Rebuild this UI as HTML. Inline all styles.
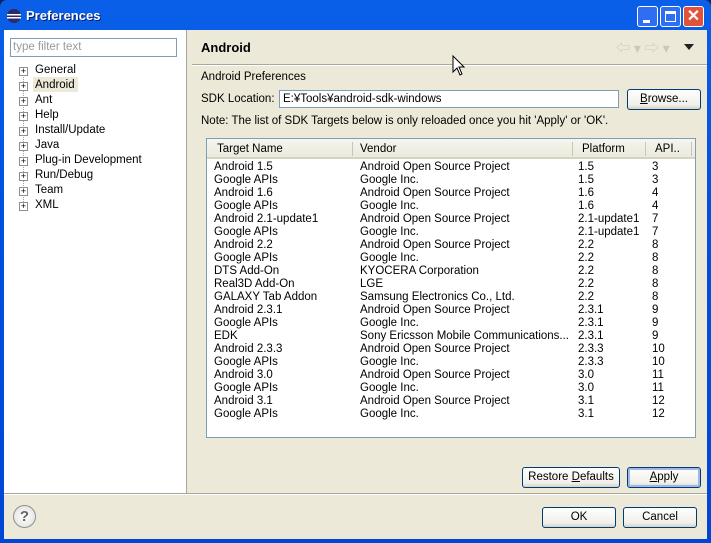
<!DOCTYPE html><html><head><meta charset="utf-8"><style>
*{margin:0;padding:0;box-sizing:border-box}
body{width:711px;height:543px;background:#0a246a;font-family:"Liberation Sans","Noto Sans CJK JP",sans-serif;font-size:11.5px;color:#000;position:relative;overflow:hidden}
.a{position:absolute;white-space:nowrap}
#win{position:absolute;left:0;top:0;width:711px;height:543px;background:linear-gradient(#0a5fe8,#0050e0 40%,#0046d5);border-radius:7px 7px 0 0}
#title{left:26px;top:8px;color:#fff;font-weight:bold;font-size:13px;text-shadow:1px 1px #0a1e6a}
#client{position:absolute;left:4px;top:30px;width:703px;height:509px;background:#ece9d8}
#left{position:absolute;left:4px;top:30px;width:183px;height:463px;background:#fff;border-right:1px solid #aca899}
.btn{position:absolute;border:1px solid #003c74;border-radius:3px;background:linear-gradient(#fff,#f0efe9 80%,#d6d0c5);text-align:center;line-height:19px;font-size:11.5px}
.tb{position:absolute;width:9px;height:9px;border:1px solid #8e8f8f;background:#fff;font-size:9px;line-height:7px;text-align:center;color:#000}
td{height:13px;line-height:13px;padding:0;white-space:nowrap}
</style></head><body>
<div id="win"></div>
<svg class="a" style="left:6px;top:8px" width="16" height="16"><circle cx="8" cy="8" r="7" fill="#2c2a6a"/><rect x="1" y="6" width="14" height="1.5" fill="#fff"/><rect x="1" y="9" width="14" height="1.5" fill="#fff"/></svg>
<div class="a" id="title">Preferences</div>
<div class="a" style="left:637px;top:6px;width:21px;height:21px;border:1px solid #fff;border-radius:3px;background:#2f6df2"><div style="position:absolute;left:5px;top:13px;width:7px;height:3px;background:#fff"></div></div>
<div class="a" style="left:660px;top:6px;width:21px;height:21px;border:1px solid #fff;border-radius:3px;background:#2f6df2"><div style="position:absolute;left:4px;top:4px;width:11px;height:11px;border:1px solid #fff;border-top-width:3px"></div></div>
<div class="a" style="left:683px;top:6px;width:21px;height:21px;border:1px solid #fff;border-radius:3px;background:#e0533a;color:#fff;font-weight:bold;font-size:16px;text-align:center;line-height:19px">✕</div>
<div id="client"></div>
<div id="left"></div>
<div class="a" style="left:10px;top:38px;width:167px;height:19px;border:1px solid #7f9db9;background:#fff;color:#999;padding-left:2px;line-height:17px">type filter text</div>
<div class="a" style="left:23px;top:72px;width:1px;height:138px;border-left:1px dotted #a0a0a0"></div>
<div class="a" style="left:33px;top:77px;width:45px;height:15px;background:#ece9d8"></div>
<div class="a" style="left:0;top:2px">
<div class="tb" style="left:19px;top:65px">+</div><div class="a" style="left:35px;top:62px">General</div>
<div class="tb" style="left:19px;top:80px">+</div><div class="a" style="left:35px;top:77px">Android</div>
<div class="tb" style="left:19px;top:95px">+</div><div class="a" style="left:35px;top:92px">Ant</div>
<div class="tb" style="left:19px;top:110px">+</div><div class="a" style="left:35px;top:107px">Help</div>
<div class="tb" style="left:19px;top:125px">+</div><div class="a" style="left:35px;top:122px">Install/Update</div>
<div class="tb" style="left:19px;top:140px">+</div><div class="a" style="left:35px;top:137px">Java</div>
<div class="tb" style="left:19px;top:155px">+</div><div class="a" style="left:35px;top:152px">Plug-in Development</div>
<div class="tb" style="left:19px;top:170px">+</div><div class="a" style="left:35px;top:167px">Run/Debug</div>
<div class="tb" style="left:19px;top:185px">+</div><div class="a" style="left:35px;top:182px">Team</div>
<div class="tb" style="left:19px;top:200px">+</div><div class="a" style="left:35px;top:197px">XML</div>
</div>
<div class="a" style="left:201px;top:40px;font-weight:bold;font-size:13px">Android</div>
<div class="a" style="left:616px;top:38px;color:#c8c8c0;font-size:14px">⇦ ▾ ⇨ ▾</div>
<div class="a" style="left:684px;top:44px;width:0;height:0;border-left:5px solid transparent;border-right:5px solid transparent;border-top:6px solid #222"></div>
<div class="a" style="left:192px;top:64px;width:515px;height:2px;border-top:1px solid #aca899;border-bottom:1px solid #fff"></div>
<div class="a" style="left:201px;top:71px">Android Preferences</div>
<div class="a" style="left:201px;top:93px">SDK Location:</div>
<div class="a" style="left:279px;top:90px;width:340px;height:18px;border:1px solid #7f9db9;background:#fff;padding-left:3px;line-height:17px">E:¥Tools¥android-sdk-windows</div>
<div class="btn" style="left:627px;top:89px;width:74px;height:21px"><u>B</u>rowse...</div>
<div class="a" style="left:201px;top:115px">Note: The list of SDK Targets below is only reloaded once you hit 'Apply' or 'OK'.</div>
<div class="a" style="left:206px;top:138px;width:490px;height:300px;border:1px solid #7f9db9;background:#fff;overflow:hidden">
<div style="position:absolute;left:0;top:0;width:490px;height:20px;background:linear-gradient(#f6f5ef,#ebeadb);border-bottom:2px solid #d6d3c2"></div>
<div style="position:absolute;left:145px;top:3px;width:1px;height:14px;background:#c8c6b8"></div>
<div style="position:absolute;left:365px;top:3px;width:1px;height:14px;background:#c8c6b8"></div>
<div style="position:absolute;left:438px;top:3px;width:1px;height:14px;background:#c8c6b8"></div>
<div style="position:absolute;left:484px;top:3px;width:1px;height:14px;background:#c8c6b8"></div>
<div class="a" style="left:10px;top:4px">Target Name</div><div class="a" style="left:153px;top:4px">Vendor</div><div class="a" style="left:375px;top:4px">Platform</div><div class="a" style="left:448px;top:4px">API..</div>
<table style="position:absolute;left:7px;top:22px;border-collapse:collapse">
<tr><td style="width:146px">Android 1.5</td><td style="width:218px">Android Open Source Project</td><td style="width:74px">1.5</td><td>3</td></tr>
<tr><td>Google APIs</td><td>Google Inc.</td><td>1.5</td><td>3</td></tr>
<tr><td>Android 1.6</td><td>Android Open Source Project</td><td>1.6</td><td>4</td></tr>
<tr><td>Google APIs</td><td>Google Inc.</td><td>1.6</td><td>4</td></tr>
<tr><td>Android 2.1-update1</td><td>Android Open Source Project</td><td>2.1-update1</td><td>7</td></tr>
<tr><td>Google APIs</td><td>Google Inc.</td><td>2.1-update1</td><td>7</td></tr>
<tr><td>Android 2.2</td><td>Android Open Source Project</td><td>2.2</td><td>8</td></tr>
<tr><td>Google APIs</td><td>Google Inc.</td><td>2.2</td><td>8</td></tr>
<tr><td>DTS Add-On</td><td>KYOCERA Corporation</td><td>2.2</td><td>8</td></tr>
<tr><td>Real3D Add-On</td><td>LGE</td><td>2.2</td><td>8</td></tr>
<tr><td>GALAXY Tab Addon</td><td>Samsung Electronics Co., Ltd.</td><td>2.2</td><td>8</td></tr>
<tr><td>Android 2.3.1</td><td>Android Open Source Project</td><td>2.3.1</td><td>9</td></tr>
<tr><td>Google APIs</td><td>Google Inc.</td><td>2.3.1</td><td>9</td></tr>
<tr><td>EDK</td><td>Sony Ericsson Mobile Communications...</td><td>2.3.1</td><td>9</td></tr>
<tr><td>Android 2.3.3</td><td>Android Open Source Project</td><td>2.3.3</td><td>10</td></tr>
<tr><td>Google APIs</td><td>Google Inc.</td><td>2.3.3</td><td>10</td></tr>
<tr><td>Android 3.0</td><td>Android Open Source Project</td><td>3.0</td><td>11</td></tr>
<tr><td>Google APIs</td><td>Google Inc.</td><td>3.0</td><td>11</td></tr>
<tr><td>Android 3.1</td><td>Android Open Source Project</td><td>3.1</td><td>12</td></tr>
<tr><td>Google APIs</td><td>Google Inc.</td><td>3.1</td><td>12</td></tr>
</table></div>
<div class="btn" style="left:522px;top:467px;width:98px;height:21px">Restore <u>D</u>efaults</div>
<div class="btn" style="left:627px;top:467px;width:74px;height:21px;border-color:#003c74;box-shadow:inset 0 0 0 2px #9db7e8"><u>A</u>pply</div>
<div class="a" style="left:4px;top:493px;width:703px;height:2px;border-top:1px solid #aca899;border-bottom:1px solid #fff"></div>
<div class="a" style="left:13px;top:505px;width:23px;height:23px;border:1px solid #8f8f8f;border-radius:50%;background:radial-gradient(#fff,#dedede);text-align:center;line-height:21px;font-weight:bold;color:#666;font-size:15px">?</div>
<div class="btn" style="left:542px;top:507px;width:74px;height:21px">OK</div>
<div class="btn" style="left:623px;top:507px;width:74px;height:21px">Cancel</div>
<svg class="a" style="left:452px;top:55px" width="14" height="22"><path d="M1 1 L1 17 L5 13 L8 20 L10 19 L7 12 L12 12 Z" fill="#fff" stroke="#000"/></svg>
</body></html>
